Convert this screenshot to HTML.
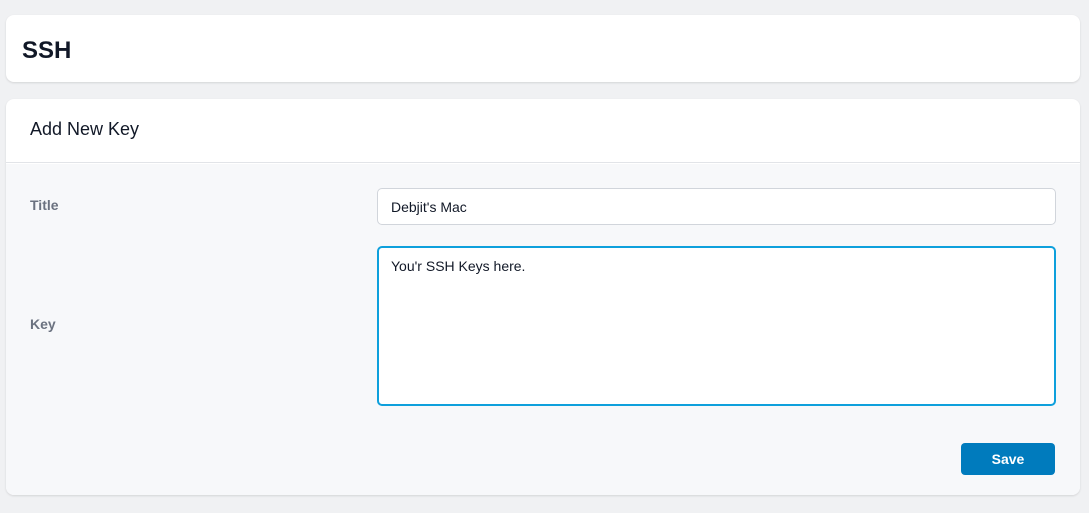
<!DOCTYPE html><html><head><style>
*{box-sizing:border-box;margin:0;padding:0}
body{width:1089px;height:513px;background:#f0f1f3;font-family:"Liberation Sans",sans-serif;position:relative;overflow:hidden}
.c{position:absolute;left:6px;width:1074px;background:#fff;border-radius:8px;box-shadow:0 1px 2px rgba(0,0,0,.12)}
h1{position:absolute;left:16px;top:22px;font-size:24px;font-weight:bold;color:#111827}
.hd{height:64px;border-bottom:1px solid #e2e4e8;padding:20px 24px;font-size:18px;color:#111827;font-weight:500}
.bd{position:absolute;top:65px;left:0;right:0;bottom:0;background:#f7f8fa;border-radius:0 0 8px 8px}
.l{position:absolute;left:24px;font-size:14px;color:#6b7280;font-weight:bold}
.in{position:absolute;left:371px;width:679px;background:#fff;font-size:14px;color:#111827;border-radius:5px}
.btn{position:absolute;left:955px;top:279px;width:94px;height:32px;background:#007bbd;color:#fff;border-radius:4px;font-size:14px;font-weight:bold;text-align:center;line-height:32px}
</style></head><body>
<div class="c" style="top:15px;height:67px"><h1>SSH</h1></div>
<div class="c" style="top:99px;height:396px">
<div class="hd">Add New Key</div>
<div class="bd">
<div class="l" style="top:33px">Title</div>
<div class="in" style="top:24px;height:37px;border:1px solid #d1d5db;padding:10px 13px">Debjit's Mac</div>
<div class="l" style="top:152px">Key</div>
<div class="in" style="top:82px;height:160px;border:2px solid #0ea0dc;padding:10px 12px">You'r SSH Keys here.</div>
<div class="btn">Save</div>
</div></div>
</body></html>
